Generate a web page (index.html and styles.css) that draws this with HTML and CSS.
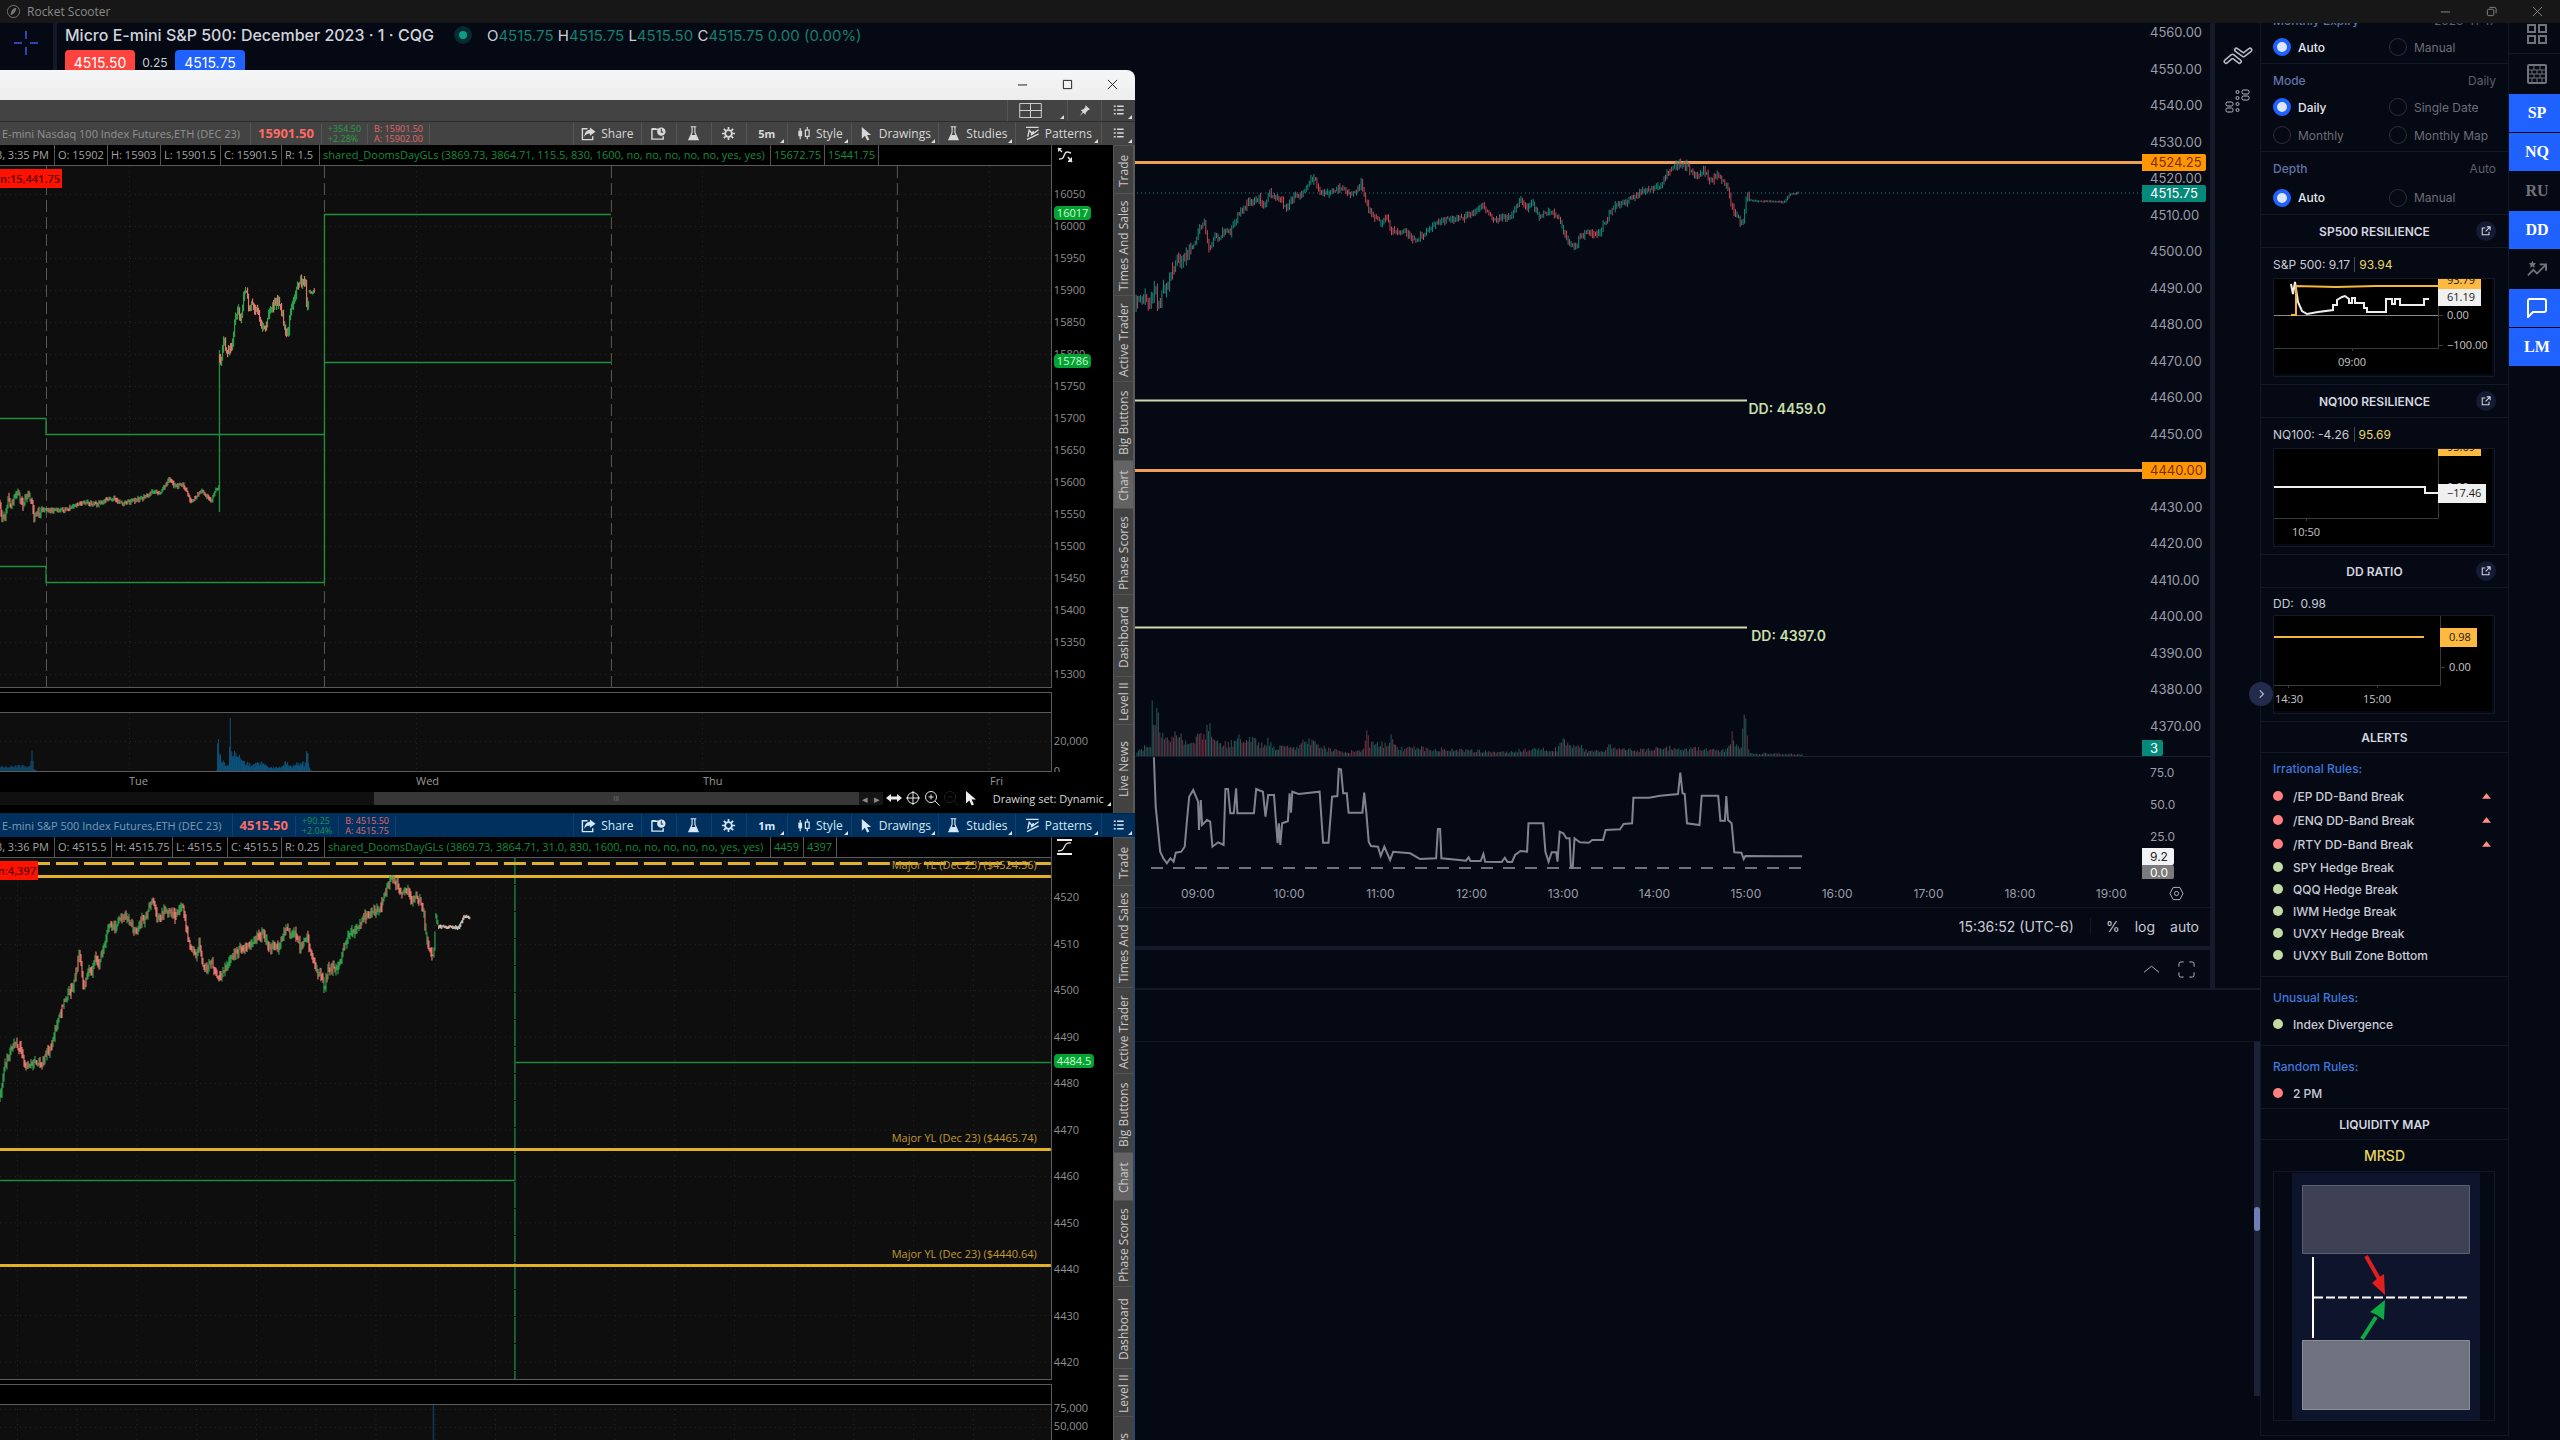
FILE: index.html
```html
<!DOCTYPE html>
<html lang="en">
<head>
    <meta charset="UTF-8">
    <meta name="viewport" content="width=device-width, initial-scale=1.0">
    <title>Rocket Scooter</title>
    <link rel="stylesheet" href="styles.css">
</head>
<body>
    <!-- shared icons -->
    <svg class="sprite" aria-hidden="true">
        <symbol id="i-share" viewBox="0 0 16 16"><path d="M7 3H1.500v11.500h11V11" fill="none" stroke="currentColor" stroke-width="1.500"/><path d="M9.500 1.500 15.500 6l-6 4.500V8C6.500 8 5 9 3.500 11.500 3.800 7 6 4.300 9.500 4z" fill="currentColor"/></symbol>
        <symbol id="i-cal" viewBox="0 0 16 16"><path d="M8 3.500H1v10.500h12V11M1 3h4" fill="none" stroke="currentColor" stroke-width="1.500"/><circle cx="11" cy="6" r="4.500" fill="currentColor"/><path d="M11 3v3.500h2" fill="none" stroke="#444" stroke-width="1.200"/></symbol>
        <symbol id="i-flask" viewBox="0 0 16 16"><path d="M5 .8h6M6.500 1v6L3 14.500h10L9.500 7V1" fill="none" stroke="currentColor" stroke-width="1.200"/><path d="M5.500 9.500h5L13 15H3z" fill="currentColor"/></symbol>
        <symbol id="i-gear" viewBox="0 0 16 16"><circle cx="8" cy="8" r="3.600" fill="none" stroke="currentColor" stroke-width="2"/><path d="M8 1v3M8 12v3M1 8h3M12 8h3M3 3l2.200 2.200M10.800 10.800 13 13M13 3l-2.200 2.200M5.200 10.800 3 13" stroke="currentColor" stroke-width="1.800"/></symbol>
        <symbol id="i-style" viewBox="0 0 16 16"><path d="M4.500 2v12M12 1v3M12 11v3" stroke="currentColor" stroke-width="1.300"/><path d="M2.500 5h4v6h-4z" fill="currentColor"/><path d="M10 4.500h4V11h-4z" fill="none" stroke="currentColor" stroke-width="1.300"/></symbol>
        <symbol id="i-cursor" viewBox="0 0 16 16"><path d="M3 1v12.500l3.300-3 2.400 5 2.300-1.100-2.400-4.900H13z" fill="currentColor"/></symbol>
        <symbol id="i-pattern" viewBox="0 0 16 16"><path d="M1 1.500h13.500M3 11.500 4.500 4.500 8 8.500 14.500 4M2 14.500 14.500 8.500M9 5.500 6.500 10" fill="none" stroke="currentColor" stroke-width="1.500"/></symbol>
        <symbol id="i-list" viewBox="0 0 16 16"><path d="M3 3.500h2M6.500 3.500h7M3 7.500h2M6.500 7.500h7M3 11.500h2M6.500 11.500h7" stroke="currentColor" stroke-width="1.500"/></symbol>
        <symbol id="i-pop" viewBox="0 0 16 16"><path d="M7 4H3v9h9V9M9 2.500h4.500V7M13.500 2.500 7.500 8.500" fill="none" stroke="currentColor" stroke-width="1.400"/></symbol>
        <symbol id="i-up" viewBox="0 0 10 6"><path d="M5 0l5 6H0z" fill="currentColor"/></symbol>
    </svg>

    <header class="titlebar">
        <svg class="logo" viewBox="0 0 16 16"><circle cx="8" cy="8" r="6.500" fill="none" stroke="#777" stroke-width="1"/><path d="M5 12c3-1 6-4 6-8-3 0-6 3-6 8zM3 13h9" fill="#777"/></svg>
        <span class="app-name">Rocket Scooter</span>
        <div class="caption">
            <button aria-label="Minimize"><svg viewBox="0 0 12 12"><path d="M1 6.500h10"/></svg></button>
            <button aria-label="Restore"><svg viewBox="0 0 12 12"><rect x="1.500" y="3.500" width="7" height="7" rx="1.500"/><path d="M4 1.500h5a2 2 0 0 1 2 2V8"/></svg></button>
            <button aria-label="Close"><svg viewBox="0 0 12 12"><path d="M1 1l10 10M11 1 1 11"/></svg></button>
        </div>
    </header>

    <div class="app">
        <div class="workspace">
            <div class="upper">
                <nav class="left-tools">
                    <svg viewBox="0 0 24 24" stroke="#3f57e8" stroke-width="1.500"><path d="M12 0v8M12 16v8M0 12h8M16 12h8"/></svg>
                </nav>

                <main class="tv">
                    <section class="price-row">
                        <div class="price-plot">
                            <svg id="priceChart" viewBox="57 23 2085 733" preserveAspectRatio="none">
                                <path d="M57 193H2142" stroke="#1d7f78" stroke-dasharray="1 3"/>
                                <path d="M57 162.500H2142M57 470.500H2142" stroke="#ef9f52" stroke-width="3"/>
                                <path d="M57 400.500H1747M57 627.500H1747" stroke="#cddcae" stroke-width="2"/>
                            </svg>
                            <div class="legend">
                                <span class="symbol">Micro E-mini S&amp;P 500: December 2023 · 1 · CQG</span>
                                <span class="live"></span>
                                <span class="ohlc">O<b>4515.75</b> H<b>4515.75</b> L<b>4515.50</b> C<b>4515.75</b> <b>0.00 (0.00%)</b></span>
                            </div>
                            <div class="quote">
                                <button class="sell">4515.50</button>
                                <span>0.25</span>
                                <button class="buy">4515.75</button>
                            </div>
                            <span class="dd-label dd-top">DD: 4459.0</span>
                            <span class="dd-label dd-bottom">DD: 4397.0</span>
                        </div>
                        <div class="price-axis">
                            <span>4560.00</span><span>4550.00</span><span>4540.00</span><span>4530.00</span><span>4520.00</span><span>4510.00</span><span>4500.00</span><span>4490.00</span><span>4480.00</span><span>4470.00</span><span>4460.00</span><span>4450.00</span><span>4440.00</span><span>4430.00</span><span>4420.00</span><span>4410.00</span><span>4400.00</span><span>4390.00</span><span>4380.00</span><span>4370.00</span>
                            <em class="tag orange tag-high">4524.25</em>
                            <em class="tag teal tag-last">4515.75</em>
                            <em class="tag orange tag-low">4440.00</em>
                            <em class="tag teal tag-vol">3</em>
                        </div>
                    </section>
                    <section class="osc-row">
                        <svg id="oscChart" viewBox="57 757 2085 123" preserveAspectRatio="none">
                            <path d="M1151 868H1802" stroke="#6f727d" stroke-width="2" stroke-dasharray="12 10"/>
                        </svg>
                        <div class="osc-axis">
                            <span>75.0</span><span>50.0</span><span>25.0</span>
                            <em class="tag white">9.2</em><em class="tag gray">0.0</em>
                        </div>
                    </section>
                    <section class="time-row">
                        <div class="hours">
                            <span>09:00</span><span>10:00</span><span>11:00</span><span>12:00</span><span>13:00</span><span>14:00</span><span>15:00</span><span>16:00</span><span>17:00</span><span>18:00</span><span>19:00</span>
                        </div>
                        <button class="axis-gear" aria-label="Axis settings"><svg viewBox="0 0 16 16"><path d="M4.500 1.500h7L15 8l-3.500 6.500h-7L1 8z"/><circle cx="8" cy="8" r="2.200"/></svg></button>
                    </section>
                    <section class="tv-footer">
                        <button class="clock">15:36:52 (UTC-6)</button>
                        <button class="pct">%</button>
                        <button>log</button>
                        <button>auto</button>
                    </section>
                    <section class="tv-drawer">
                        <button aria-label="Open panel"><svg viewBox="0 0 18 18"><path d="M1 12 9 5.500 17 12"/></svg></button>
                        <button aria-label="Maximize"><svg viewBox="0 0 18 18"><path d="M1 6V3q0-2 2-2h3M12 1h3q2 0 2 2v3M17 12v3q0 2-2 2h-3M6 17H3q-2 0-2-2v-3"/></svg></button>
                    </section>
                </main>

                <nav class="draw-tools">
                    <svg class="waves" viewBox="0 0 30 20">
                        <path class="outer" d="M3 15.500 9.500 10l7 5.500M13.500 4l7 5L27 4"/>
                        <path class="inner" d="M3 15.500 9.500 10l7 5.500M13.500 4l7 5L27 4"/>
                    </svg>
                    <svg class="levels" viewBox="0 0 26 24"><rect x="1" y="13" width="7" height="4" rx="1.500"/><rect x="1" y="19" width="7" height="4" rx="1.500"/><rect x="17" y="1" width="7" height="4" rx="1.500"/><rect x="17" y="7" width="7" height="4" rx="1.500"/><circle cx="12.500" cy="3" r="1.500"/><circle cx="12.500" cy="9" r="1.500"/><circle cx="12.500" cy="15" r="1.500"/><circle cx="12.500" cy="21" r="1.500"/></svg>
                </nav>
            </div>
            <div class="lower">
                <div class="lower-head"></div>
                <div class="lower-body"><div class="scroll"><i></i></div></div>
            </div>
        </div>

        <aside class="panel">
            <button class="collapse" aria-label="Collapse panel"><svg viewBox="0 0 10 10"><path d="M4 2l3 3-3 3"/></svg></button>
            <div class="panel-scroll">
                <section class="setting">
                    <h3>Monthly Expiry <span>2023-11-17</span></h3>
                    <div class="options">
                        <label><input type="radio" name="expiry" checked>Auto</label>
                        <label><input type="radio" name="expiry">Manual</label>
                    </div>
                </section>
                <section class="setting">
                    <h3>Mode <span>Daily</span></h3>
                    <div class="options">
                        <label><input type="radio" name="mode" checked>Daily</label>
                        <label><input type="radio" name="mode">Single Date</label>
                        <label><input type="radio" name="mode">Monthly</label>
                        <label><input type="radio" name="mode">Monthly Map</label>
                    </div>
                </section>
                <section class="setting">
                    <h3>Depth <span>Auto</span></h3>
                    <div class="options tall">
                        <label><input type="radio" name="depth" checked>Auto</label>
                        <label><input type="radio" name="depth">Manual</label>
                    </div>
                </section>

                <h2>SP500 RESILIENCE <button aria-label="Pop out"><svg><use href="#i-pop"/></svg></button></h2>
                <section class="mini">
                    <p>S&amp;P 500: 9.17 <b>93.94</b></p>
                    <svg viewBox="0 0 220 97">
                        <rect width="218" height="95"/>
                        <path class="frame" d="M164.500 0V69.500H0M78.500 69v3M164 36.500h5M164 66.500h5"/>
                        <path class="zero" d="M0 36.500h164"/>
                        <path class="w" d="M17 5l2 10 2-12 3 20 4 9 5 3 11-2 15-2v-5h4v-5l5-3 3-1 4 3v4h3v-5h3v5h9v5h3v4h19v-13h6v5h3v-5h5v6h24v-6h5"/>
                        <path class="y" d="M17 36h5V7l40 1 40-1h62"/>
                        <path class="ybox" d="M164 0h43v10h-43z"/><text class="dark" x="173" y="5">93.79</text>
                        <path class="wbox" d="M164 10h43v17h-43z"/><text class="dark" x="173" y="22">61.19</text>
                        <text x="173" y="40">0.00</text><text x="173" y="70">−100.00</text>
                        <text class="mid" x="78" y="87">09:00</text>
                    </svg>
                </section>

                <h2>NQ100 RESILIENCE <button aria-label="Pop out"><svg><use href="#i-pop"/></svg></button></h2>
                <section class="mini">
                    <p>NQ100: -4.26 <b>95.69</b></p>
                    <svg viewBox="0 0 220 97">
                        <rect width="218" height="95"/>
                        <path class="frame" d="M164.500 0V69.500H0M32.500 69v3"/>
                        <path class="w" d="M0 38h151v6h13"/>
                        <path class="ybox" d="M164 0h43v7h-43z"/><text class="dark" x="173" y="2">95.69</text>
                        <text x="173" y="42">0.00</text>
                        <path class="wbox" d="M164 35h48v19h-48z"/><text class="dark" x="173" y="48">−17.46</text>
                        <text class="mid" x="32" y="87">10:50</text>
                    </svg>
                </section>

                <h2>DD RATIO <button aria-label="Pop out"><svg><use href="#i-pop"/></svg></button></h2>
                <section class="mini tight">
                    <p>DD: &nbsp;0.98</p>
                    <svg viewBox="0 0 220 97">
                        <rect width="218" height="95"/>
                        <path class="frame" d="M166.500 0V69.500H0M14.500 69v3M103.500 69v3M166 51.500h5"/>
                        <path class="y" d="M0 21h150"/>
                        <path class="ybox" d="M166 12h37v19h-37z"/><text class="dark" x="175" y="25">0.98</text>
                        <text x="175" y="55">0.00</text>
                        <text class="mid" x="15" y="87">14:30</text><text class="mid" x="103" y="87">15:00</text>
                    </svg>
                </section>

                <h2 class="short">ALERTS</h2>
                <section class="rules">
                    <h4>Irrational Rules:</h4>
                    <ul>
                        <li class="hot up">/EP DD-Band Break <svg><use href="#i-up"/></svg></li>
                        <li class="hot up">/ENQ DD-Band Break <svg><use href="#i-up"/></svg></li>
                        <li class="hot up">/RTY DD-Band Break <svg><use href="#i-up"/></svg></li>
                        <li>SPY Hedge Break</li>
                        <li>QQQ Hedge Break</li>
                        <li>IWM Hedge Break</li>
                        <li>UVXY Hedge Break</li>
                        <li>UVXY Bull Zone Bottom</li>
                    </ul>
                </section>
                <section class="rules spaced">
                    <h4>Unusual Rules:</h4>
                    <ul><li>Index Divergence</li></ul>
                </section>
                <section class="rules spaced last">
                    <h4>Random Rules:</h4>
                    <ul><li class="hot">2 PM</li></ul>
                </section>

                <h2 class="short">LIQUIDITY MAP</h2>
                <section class="liquidity">
                    <h5>MRSD</h5>
                    <svg viewBox="0 0 220 248">
                        <path d="M18 1h188v247H18z" fill="#0e142b"/>
                        <path d="M28.500 13.500h167v68h-167z" fill="#3e4154" stroke="#5c6073"/>
                        <path d="M28.500 168.500h167v69h-167z" fill="#6e717e" stroke="#8b8e9a"/>
                        <path d="M39 85v81" stroke="#fff" stroke-width="2"/>
                        <path d="M40 125.500h153" stroke="#fff" stroke-width="2" stroke-dasharray="9 3"/>
                        <path d="M92 84l13 23" stroke="#e0201f" stroke-width="4"/><path d="M98 111l6-5 6-4 1 21z" fill="#e0201f"/>
                        <path d="M88 167l14-22" stroke="#0faa45" stroke-width="4"/><path d="M96 140l15-12-1 20-7-5z" fill="#0faa45"/>
                    </svg>
                </section>
            </div>
        </aside>

        <nav class="rail">
            <button aria-label="Layout"><svg viewBox="0 0 20 20"><path d="M1 1h7v7H1zM12 1h7v7h-7zM1 12h7v7H1zM12 12h7v7h-7z"/></svg></button>
            <button aria-label="Wall"><svg viewBox="0 0 20 20"><rect x="1" y="1" width="18" height="18" rx="1"/><path stroke-width="1" d="M2 6h16M2 10h16M2 14h16M7 2v4M13 2v4M5 6v4M10 6v4M15 6v4M7 10v4M13 10v4M5 14v4M10 14v4M15 14v4"/></svg></button>
            <button class="on">SP</button>
            <button class="on">NQ</button>
            <button>RU</button>
            <button class="on">DD</button>
            <button aria-label="Signals"><svg viewBox="0 0 22 18"><path d="M1 16l6-6 4 4 9-9M14 4h7v7"/><path d="M6 0l1.200 2.500 2.800.3-2 2 .5 2.700L6 6.200 3.500 7.500 4 4.800l-2-2 2.800-.3z" fill="currentColor" stroke="none"/></svg></button>
            <button class="on" aria-label="Chat"><svg viewBox="0 0 20 20"><path d="M1 19V3q0-2 2-2h14q2 0 2 2v9q0 2-2 2H6z"/></svg></button>
            <button class="on">LM</button>
        </nav>
    </div>

    <!-- floating trading window -->
    <div class="window">
        <div class="window-bar">
            <button aria-label="Minimize"><svg viewBox="0 0 12 12"><path d="M1 6.500h10"/></svg></button>
            <button aria-label="Maximize"><svg viewBox="0 0 12 12"><path d="M1.500 1.500h9v9h-9z"/></svg></button>
            <button aria-label="Close"><svg viewBox="0 0 12 12"><path d="M1 1l10 10M11 1 1 11"/></svg></button>
        </div>
        <div class="window-tools">
            <button class="drop w60" aria-label="Grid"><svg class="wide" viewBox="0 0 24 16"><path d="M.5.500h23v15H.500zM12 0v16M0 8h24" fill="none" stroke="currentColor"/></svg></button>
            <button class="w34" aria-label="Pin"><svg viewBox="0 0 16 16"><path d="M9 2l5 5-2 .5-2.500 2.500-.5 2.500L6.800 10.300 2.500 14 6 9.500 4 7.500 6.500 7 9 4.500z" fill="currentColor"/></svg></button>
            <button class="drop w34" aria-label="Menu"><svg><use href="#i-list"/></svg></button>
        </div>

        <section class="chart">
            <div class="toolbar">
                <span class="name">E-mini Nasdaq 100 Index Futures,ETH (DEC 23)</span>
                <strong>15901.50</strong>
                <span class="chg">+354.50<br>+2.28%</span>
                <span class="bid">B: 15901.50<br>A: 15902.00</span>
                <div class="actions">
                    <button class="w68"><svg><use href="#i-share"/></svg>Share</button>
                    <button class="w35" aria-label="Events"><svg><use href="#i-cal"/></svg></button>
                    <button class="w35" aria-label="Lab"><svg><use href="#i-flask"/></svg></button>
                    <button class="w35" aria-label="Settings"><svg><use href="#i-gear"/></svg></button>
                    <button class="drop w41"><b>5m</b></button>
                    <button class="drop w64"><svg><use href="#i-style"/></svg>Style</button>
                    <button class="drop w87"><svg><use href="#i-cursor"/></svg>Drawings</button>
                    <button class="drop w77"><svg><use href="#i-flask"/></svg>Studies</button>
                    <button class="drop w86"><svg><use href="#i-pattern"/></svg>Patterns</button>
                    <button class="drop w34" aria-label="Menu"><svg><use href="#i-list"/></svg></button>
                </div>
            </div>
            <div class="chart-body">
                <div class="chart-area">
                    <div class="row data-row">
                        <div class="cells cells-nq">
                            <span class="cut"><i>3, 3:35 PM</i></span><span>O: 15902</span><span>H: 15903</span><span>L: 15901.5</span><span>C: 15901.5</span><span>R: 1.5</span><span class="g">shared_DoomsDayGLs (3869.73, 3864.71, 115.5, 830, 1600, no, no, no, no, no, yes, yes)</span><span class="g">15672.75</span><span class="g">15441.75</span>
                        </div>
                        <svg class="scale-icon" viewBox="0 0 16 16"><path d="M1 5V1h4zM15 15h-4v-1l4-4z" fill="#eee"/><path d="M1 1l4 4M2 12c4 0 4-1 5.500-4.500S11 5 14 6M11 10l4 5" fill="none" stroke="#ddd" stroke-width="1.500"/></svg>
                    </div>
                    <div class="row plot-row">
                        <div class="plot">
                            <svg id="nqChart" viewBox="0 166 1051 521" preserveAspectRatio="none"></svg>
                            <span class="badge badge-nq"><i>own:15,441.75</i></span>
                        </div>
                        <div class="axis axis-nq">
                            <span>16050</span><span>16000</span><span>15950</span><span>15900</span><span>15850</span><span>15800</span><span>15750</span><span>15700</span><span>15650</span><span>15600</span><span>15550</span><span>15500</span><span>15450</span><span>15400</span><span>15350</span><span>15300</span>
                            <em class="chip chip-a">16017</em>
                            <em class="chip chip-b">15786</em>
                        </div>
                    </div>
                    <div class="row strip-row"><div></div></div>
                    <div class="row vol-row">
                        <svg id="nqVolume" viewBox="0 713 1051 58" preserveAspectRatio="none"></svg>
                        <div class="axis axis-vol"><span>20,000</span><span>0</span></div>
                    </div>
                    <div class="days"><span>Tue</span><span>Wed</span><span>Thu</span><span>Fri</span></div>
                    <div class="scroller">
                        <div class="track"><div class="thumb">III</div></div>
                        <button aria-label="Scroll left">◂</button>
                        <button aria-label="Scroll right">▸</button>
                        <svg viewBox="0 0 16 16"><path d="M0 8l5-4v8zM16 8l-5-4v8zM5 6.500h6v3H5z" fill="#eee" stroke="none"/></svg>
                        <svg viewBox="0 0 16 16"><circle cx="8" cy="8" r="5.500"/><path d="M8 1v14M1 8h14"/></svg>
                        <svg viewBox="0 0 16 16"><circle cx="7" cy="7" r="5.500"/><path d="M11 11l4.500 4.500M4.500 7h5M7 4.500v5"/></svg>
                        <svg class="faint" viewBox="0 0 16 16"><circle cx="7" cy="7" r="5.500"/><path d="M11 11l4.500 4.500M4.500 7h5"/></svg>
                        <svg class="solid" viewBox="0 0 16 16"><use href="#i-cursor"/></svg>
                        <button class="drop set">Drawing set: Dynamic</button>
                    </div>
                </div>
                <nav class="tabs">
                    <a href="#" class="t48">Trade</a><a href="#" class="t102">Times And Sales</a><a href="#" class="t86">Active Trader</a><a href="#" class="t79">Big Buttons</a><a href="#" class="t48 active">Chart</a><a href="#" class="t86">Phase Scores</a><a href="#" class="t82">Dashboard</a><a href="#" class="t48">Level II</a><a href="#" class="t86">Live News</a>
                </nav>
            </div>
        </section>

        <section class="chart focused">
            <div class="toolbar">
                <span class="name">E-mini S&amp;P 500 Index Futures,ETH (DEC 23)</span>
                <strong>4515.50</strong>
                <span class="chg">+90.25<br>+2.04%</span>
                <span class="bid">B: 4515.50<br>A: 4515.75</span>
                <div class="actions">
                    <button class="w68"><svg><use href="#i-share"/></svg>Share</button>
                    <button class="w35" aria-label="Events"><svg><use href="#i-cal"/></svg></button>
                    <button class="w35" aria-label="Lab"><svg><use href="#i-flask"/></svg></button>
                    <button class="w35" aria-label="Settings"><svg><use href="#i-gear"/></svg></button>
                    <button class="drop w41"><b>1m</b></button>
                    <button class="drop w64"><svg><use href="#i-style"/></svg>Style</button>
                    <button class="drop w87"><svg><use href="#i-cursor"/></svg>Drawings</button>
                    <button class="drop w77"><svg><use href="#i-flask"/></svg>Studies</button>
                    <button class="drop w86"><svg><use href="#i-pattern"/></svg>Patterns</button>
                    <button class="drop w34" aria-label="Menu"><svg><use href="#i-list"/></svg></button>
                </div>
            </div>
            <div class="chart-body">
                <div class="chart-area">
                    <div class="row data-row">
                        <div class="cells cells-es">
                            <span class="cut"><i>3, 3:36 PM</i></span><span>O: 4515.5</span><span>H: 4515.75</span><span>L: 4515.5</span><span>C: 4515.5</span><span>R: 0.25</span><span class="g">shared_DoomsDayGLs (3869.73, 3864.71, 31.0, 830, 1600, no, no, no, no, no, yes, yes)</span><span class="g">4459</span><span class="g">4397</span>
                        </div>
                        <svg class="scale-icon" viewBox="0 0 16 16"><path d="M0 1h15M0 15h15" stroke="#eee" stroke-width="2"/><path d="M1 12c4 0 5-1 6.500-4.500S11 3.500 14 4" fill="none" stroke="#ddd" stroke-width="1.300"/></svg>
                    </div>
                    <div class="row plot-row">
                        <div class="plot">
                            <svg id="esChart" viewBox="0 858 1051 521" preserveAspectRatio="none"></svg>
                            <span class="badge badge-es"><i>own:4,397</i></span>
                            <span class="level level-1">Major YL (Dec 23) ($4524.56)</span>
                            <span class="level level-2">Major YL (Dec 23) ($4465.74)</span>
                            <span class="level level-3">Major YL (Dec 23) ($4440.64)</span>
                        </div>
                        <div class="axis axis-es">
                            <span>4520</span><span>4510</span><span>4500</span><span>4490</span><span>4480</span><span>4470</span><span>4460</span><span>4450</span><span>4440</span><span>4430</span><span>4420</span>
                            <em class="chip chip-c">4484.5</em>
                        </div>
                    </div>
                    <div class="row strip-row"><div></div></div>
                    <div class="row vol-row">
                        <svg id="esVolume" viewBox="0 1405 1051 58" preserveAspectRatio="none"></svg>
                        <div class="axis axis-vol2"><span>75,000</span><span>50,000</span></div>
                    </div>
                </div>
                <nav class="tabs">
                    <a href="#" class="t48">Trade</a><a href="#" class="t102">Times And Sales</a><a href="#" class="t86">Active Trader</a><a href="#" class="t79">Big Buttons</a><a href="#" class="t48 active">Chart</a><a href="#" class="t86">Phase Scores</a><a href="#" class="t82">Dashboard</a><a href="#" class="t48">Level II</a><a href="#" class="t86">Live News</a>
                </nav>
            </div>
        </section>
    </div>

    <script src="charts.js"></script>
</body>
</html>
```
FILE: styles.css
```css
:root {
    --bg: #050913;
    --line: #131827;
    --band: #151a28;
    --text: #c9ccd6;
    --muted: #9a9da8;
    --blue: #1f62ff;
    --red: #ff8080;
    --green: #c3dba6;
    --ui: Inter, "Open Sans", sans-serif;
    --tos: "Open Sans", "Noto Sans", sans-serif;
}

* {
    margin: 0;
    padding: 0;
    box-sizing: border-box;
}

body {
    height: 100vh;
    display: flex;
    flex-direction: column;
    overflow: hidden;
    position: relative;
    background: var(--bg);
    color: var(--text);
    font-family: var(--ui);
    font-size: 12px;
}

button {
    border: none;
    background: none;
    color: inherit;
    font: inherit;
    cursor: pointer;
}

svg { display: block; }
em, i { font-style: normal; }
ul { list-style: none; }
a { color: inherit; text-decoration: none; }
.sprite { display: none; }

/* title bar */
.titlebar {
    flex: none;
    height: 23px;
    display: flex;
    align-items: center;
    padding-left: 6px;
    background: #171717;
    color: #8a8a8a;
    font-family: var(--tos);
}

.logo {
    width: 15px;
    height: 15px;
    margin-right: 6px;
}

.caption {
    margin-left: auto;
    display: flex;
}

.caption button {
    width: 46px;
    display: flex;
    justify-content: center;
}

.caption svg {
    width: 11px;
    height: 11px;
    fill: none;
    stroke: #8c8c8c;
}

/* main frame */
.app {
    flex: 1;
    display: flex;
    min-height: 0;
}

.workspace {
    flex: 1;
    min-width: 0;
    display: flex;
    flex-direction: column;
}

.upper {
    display: flex;
    border-bottom: 2px solid var(--band);
}

.left-tools {
    width: 57px;
    padding: 8px 0 0 14px;
    border-right: 4px solid #141828;
}

.left-tools svg {
    width: 24px;
    height: 24px;
}

.tv {
    flex: 1;
    min-width: 0;
    border-right: 5px solid #151929;
}

.price-row {
    display: flex;
    height: 734px;
    border-bottom: 1px solid #1a1f2d;
}

.price-plot {
    flex: 1;
    position: relative;
}

.price-plot svg {
    width: 100%;
    height: 100%;
}

.legend,
.quote {
    position: absolute;
    left: 8px;
    display: flex;
    align-items: center;
    white-space: nowrap;
}

.legend { top: 2px; }
.quote { top: 27px; }

.symbol {
    font-size: 16px;
    font-weight: 500;
    line-height: 20px;
    color: #d2d4dc;
}

.live {
    width: 18px;
    height: 18px;
    margin: 0 15px 0 20px;
    border: 5px solid #062a31;
    border-radius: 50%;
    background: #0b9d83;
}

.ohlc { font-size: 15px; }

.ohlc b {
    font-weight: normal;
    color: #138070;
}

.quote button {
    width: 70px;
    height: 24px;
    border-radius: 4px;
    color: #fff;
    font-size: 14px;
}

.quote span {
    width: 40px;
    text-align: center;
}

.sell { background: #ff4440; }
.buy { background: var(--blue); }

.dd-label {
    position: absolute;
    right: 316px;
    font-size: 14px;
    font-weight: 600;
    color: #c8dfa8;
}

.dd-top { top: 377px; }
.dd-bottom { top: 604px; }

.price-axis {
    width: 68px;
    padding: 1px 8px 22px;
    position: relative;
    display: flex;
    flex-direction: column;
    justify-content: space-between;
    line-height: 16px;
    font-size: 13px;
    color: var(--muted);
}

.tag {
    position: absolute;
    left: 0;
    width: 64px;
    height: 17px;
    padding-left: 8px;
    line-height: 17px;
    border-radius: 0 2px 2px 0;
    color: #fff;
}

.orange { background: #ff9800; color: #7c2c00; }
.teal { background: #05897a; }
.tag-high { top: 131px; }
.tag-last { top: 162px; }
.tag-low { top: 439px; }
.tag-vol { top: 717px; width: 21px; height: 16px; }

.osc-row {
    display: flex;
    height: 123px;
}

.osc-row > svg {
    flex: 1;
    min-width: 0;
    height: 123px;
}

.osc-axis {
    width: 68px;
    padding-left: 8px;
    line-height: 32px;
    color: var(--muted);
}

.osc-axis span { display: block; }

.osc-axis .tag {
    position: static;
    display: block;
    width: 32px;
    margin-left: -8px;
}

.white { background: #f2f3f7; color: #222; }
.osc-axis .white { margin-top: -5px; }
.gray { background: #7b7b7b; }
.osc-axis .gray { height: 14px; line-height: 16px; overflow: hidden; }

.time-row {
    height: 28px;
    display: flex;
    align-items: center;
    justify-content: flex-end;
    border-bottom: 1px solid var(--line);
    color: var(--muted);
}

.hours {
    width: 1005px;
    display: flex;
}

.hours span {
    flex: 1;
    text-align: center;
}

.axis-gear {
    width: 53px;
    padding-left: 12px;
}

.axis-gear svg {
    width: 15px;
    height: 15px;
}

.axis-gear svg,
.tv-drawer svg,
.draw-tools svg,
.left-tools svg {
    fill: none;
}

.axis-gear svg,
.tv-drawer svg,
.draw-tools svg {
    stroke: #b9bcc7;
}

.tv-footer,
.tv-drawer {
    display: flex;
    justify-content: flex-end;
    align-items: center;
    gap: 15px;
    padding-right: 11px;
}

.tv-footer {
    height: 42px;
    padding-bottom: 2px;
    border-bottom: 4px solid var(--band);
    font-size: 14px;
}

.tv-drawer {
    height: 38px;
    gap: 18px;
    padding-right: 15px;
}

.clock {
    padding-right: 16px;
    border-right: 1px solid var(--line);
}

.tv-drawer svg { width: 17px; height: 17px; }

.draw-tools {
    width: 45px;
    padding: 23px 0 0 1px;
    display: flex;
    flex-direction: column;
    align-items: center;
    gap: 23px;
}

.waves {
    width: 30px;
    height: 20px;
    stroke-linecap: round;
    stroke-linejoin: round;
}

.waves .outer { stroke-width: 5; }
.waves .inner { stroke: var(--bg); stroke-width: 2; }

.levels {
    width: 26px;
    height: 24px;
}

.lower {
    flex: 1;
    display: flex;
    flex-direction: column;
}

.lower-head {
    height: 52px;
    border-bottom: 1px solid var(--line);
}

.lower-body {
    flex: 1;
    display: flex;
    justify-content: flex-end;
    padding-bottom: 44px;
}

.scroll {
    width: 6px;
    display: flex;
    align-items: center;
    background: #1c2138;
}

.scroll i {
    width: 6px;
    height: 24px;
    border-radius: 3px;
    background: #6f7fb5;
}

/* right panel */
.panel {
    flex: none;
    width: 249px;
    position: relative;
    border: 1px solid var(--line);
    border-top: none;
    margin-bottom: 4px;
}

.panel-scroll {
    height: 100%;
    overflow: hidden;
}

.collapse {
    position: absolute;
    z-index: 2;
    left: -12px;
    top: 659px;
    width: 24px;
    height: 24px;
    border-radius: 50%;
    background: #222b4c;
}

.collapse svg {
    width: 12px;
    height: 12px;
    margin: auto;
    fill: none;
    stroke: #b5bbd2;
}

.setting {
    padding: 3px 12px 0;
    border-bottom: 1px solid var(--line);
}

.setting:first-child { margin-top: -19px; }

.setting h3 {
    height: 26px;
    display: flex;
    justify-content: space-between;
    align-items: center;
    font-size: 12px;
    font-weight: 500;
    color: #6273a8;
}

.setting h3 span {
    font-weight: normal;
    color: #5d606b;
}

.options {
    display: grid;
    grid-template-columns: 116px 1fr;
    grid-auto-rows: 28px;
    padding-bottom: 2px;
}

.options.tall {
    grid-auto-rows: 33px;
    padding-bottom: 0;
}

.options label {
    display: flex;
    align-items: center;
    gap: 7px;
    white-space: nowrap;
    color: #6b6e78;
}

.options label:has(:checked) {
    color: #e4e6ee;
    font-weight: 500;
}

.options input {
    appearance: none;
    width: 18px;
    height: 18px;
    border: 1px solid #2b2f3f;
    border-radius: 50%;
}

.options input:checked {
    border: 4px solid var(--blue);
    background: #dde6ff;
}

.panel h2 {
    height: 33px;
    position: relative;
    display: flex;
    align-items: center;
    justify-content: center;
    padding-right: 20px;
    border-bottom: 1px solid var(--line);
    font-size: 12px;
    font-weight: 600;
    color: #d5d7e0;
}

.panel h2.short {
    height: 31px;
    padding-right: 0;
}

.panel h2 button {
    position: absolute;
    right: 12px;
    width: 20px;
    height: 20px;
    border-radius: 50%;
    background: #151b34;
    display: flex;
    align-items: center;
    justify-content: center;
}

.panel h2 svg {
    width: 12px;
    height: 12px;
}

.mini {
    padding: 8px 12px 7px;
    border-bottom: 1px solid var(--line);
}

.mini p {
    line-height: 18px;
    margin-bottom: 4px;
}

.mini.tight { padding-top: 7px; }
.mini.tight p { margin-bottom: 2px; }

.mini p b {
    margin-left: 1px;
    padding-left: 4px;
    border-left: 1px solid #444855;
    font-weight: normal;
    color: #e9d96a;
}

.mini svg,
.liquidity svg {
    width: 222px;
    border: 1px solid var(--line);
}

.mini svg { font: 11px var(--tos); fill: #c8c8c8; }
.mini rect { fill: #000; }
.mini path { fill: none; stroke-width: 1; }
.mini .frame { stroke: #3a3a3a; }
.mini .zero { stroke: #8a8a8a; }
.mini .w { stroke: #eee; stroke-width: 2; }
.mini .y { stroke: #f6b73e; stroke-width: 2; }
.mini .ybox { fill: #fdb940; }
.mini .wbox { fill: #f0f0f0; }
.mini .dark { fill: #1a1a1a; }
.mini .mid { text-anchor: middle; }

.rules {
    padding: 0 12px 10px;
    border-bottom: 1px solid var(--line);
}

.rules.spaced { padding-top: 5px; }
.rules.last { padding-bottom: 4px; }

.rules h4 {
    line-height: 31px;
    font-size: 12px;
    font-weight: 500;
    color: #3f78dc;
}

.rules li {
    height: 22px;
    display: flex;
    align-items: center;
    font-weight: 500;
}

.rules li::before {
    content: "";
    width: 10px;
    height: 10px;
    margin-right: 10px;
    border-radius: 50%;
    background: var(--green);
}

.rules li.up { height: 24px; }
.rules li.hot::before { background: var(--red); }

.rules li svg {
    width: 9px;
    height: 6px;
    margin: 0 5px 0 auto;
    color: #ff8f80;
}

.liquidity { padding: 0 12px; }

.liquidity h5 {
    line-height: 31px;
    text-align: center;
    font-size: 14px;
    font-weight: 500;
    color: #e8d566;
}

/* right rail */
.rail {
    width: 51px;
    display: flex;
    flex-direction: column;
    gap: 1px;
}

.rail button {
    height: 38px;
    display: flex;
    align-items: center;
    justify-content: center;
    padding-left: 5px;
    color: #71737b;
    font: bold 16px "Liberation Serif", serif;
}

.rail button:first-child {
    height: 31px;
    padding-bottom: 8px;
    border-bottom: 1px solid var(--line);
}

.rail .on {
    background: var(--blue);
    color: #fff;
}

.rail svg {
    width: 20px;
    height: 20px;
    fill: none;
    stroke: currentColor;
    stroke-width: 2;
}

/* floating window */
.window {
    position: absolute;
    z-index: 5;
    left: 0;
    top: 70px;
    bottom: 0;
    width: 44.33%;
    display: flex;
    flex-direction: column;
    overflow: hidden;
    border-radius: 0 8px 0 0;
    background: #000;
    color: #d8d8d8;
    font-family: var(--tos);
    font-size: 11px;
    white-space: nowrap;
}

.window > * { flex: none; }

.window-bar {
    height: 30px;
    display: flex;
    justify-content: flex-end;
    padding-bottom: 2px;
    background: linear-gradient(#f5f6f7, #ededed);
}

.window-bar button {
    width: 45px;
    display: flex;
    align-items: center;
    justify-content: center;
}

.window-bar svg {
    width: 11px;
    height: 11px;
    fill: none;
    stroke: #111;
}

.window-tools {
    height: 21px;
    display: flex;
    justify-content: flex-end;
    background: #434343;
}

.window-tools button,
.actions button {
    position: relative;
    display: flex;
    align-items: center;
    justify-content: center;
    gap: 5px;
    border-left: 1px solid #555;
}

.window-tools svg,
.actions svg {
    width: 15px;
    height: 15px;
}

.window-tools svg.wide {
    width: 23px;
    margin-right: 14px;
}

/* corner mark of the drop-down buttons */
.drop::after {
    content: "";
    position: absolute;
    right: 3px;
    bottom: 2px;
    border: 2px solid transparent;
    border-right-color: #ddd;
    border-bottom-color: #ddd;
}

.w34 { width: 34px; }
.w35 { width: 35px; }
.w41 { width: 41px; }
.w60 { width: 60px; }
.w64 { width: 64px; }
.w68 { width: 68px; }
.w77 { width: 77px; }
.w86 { width: 86px; }
.w87 { width: 87px; }

.toolbar {
    height: 24px;
    display: flex;
    align-items: center;
    padding-left: 2px;
    border-top: 1px solid #2c2c2c;
    background: #434343;
}

.name { color: #929292; }

.toolbar strong {
    margin-left: 10px;
    padding: 0 7px;
    border-left: 1px solid #555;
    line-height: 23px;
    font-size: 13px;
    color: #ff6b63;
}

.chg,
.bid {
    padding: 0 6px;
    border-left: 1px solid #555;
    font-size: 9px;
    line-height: 10px;
}

.chg { color: #22a044; }
.bid { border-right: 1px solid #555; color: #e26767; }

.actions {
    margin-left: auto;
    display: flex;
    align-self: stretch;
}

.actions button { font-size: 12px; }
.actions b { font-size: 11px; }

.focused .toolbar {
    background: #00315e;
    border-color: #00294f;
    color: #d5e8fa;
}

.focused .name { color: #7f98b3; }
.focused .toolbar * { border-left-color: #12406c; border-right-color: #12406c; }
.focused .drop::after { border-left-color: transparent; border-right-color: #d5e8fa; }
.focused .toolbar .chg { color: #169455; }

.chart-body {
    display: flex;
}

.chart-area {
    flex: 1;
    min-width: 0;
}

.row {
    display: grid;
    grid-template-columns: 1fr 61px;
}

.data-row { height: 21px; }

.cells {
    display: grid;
    border-bottom: 1px solid #5a5a5a;
    border-right: 1px solid #5a5a5a;
    line-height: 20px;
    color: #a5a5a5;
}

.cells-nq { grid-template-columns: 55px 53px 53px 60px 61px 38px 451px 54px 54px; }
.cells-es { grid-template-columns: 55px 57px 61px 55px 54px 43px 446px 33px 33px; }

.cells span {
    padding-left: 3px;
    border-right: 1px solid #555;
    overflow: hidden;
}

.cells .cut {
    display: flex;
    justify-content: flex-end;
    padding-right: 5px;
}

.cells .g { color: #158c3c; }

.scale-icon {
    width: 16px;
    height: 16px;
    margin: 2px 0 0 5px;
}

.plot-row { height: 522px; }

.plot {
    position: relative;
    background: #0e0e0e;
    border-right: 1px solid #5a5a5a;
    border-bottom: 1px solid #5a5a5a;
    overflow: hidden;
}

.plot svg {
    width: 100%;
    height: 100%;
}

.axis {
    position: relative;
    display: flex;
    flex-direction: column;
    justify-content: space-between;
    padding-left: 2px;
    line-height: 16px;
    color: #8f8f8f;
}

.axis-nq { padding-top: 20px; padding-bottom: 6px; }
.axis-es { padding-top: 31px; padding-bottom: 10px; }
.axis-vol { padding-top: 21px; overflow: hidden; justify-content: flex-start; gap: 14px; }
.axis-vol2 { margin-top: -4px; justify-content: flex-start; gap: 2px; }

.chip {
    position: absolute;
    left: 2px;
    padding: 0 3px;
    line-height: 14px;
    border-radius: 4px;
    background: #05a233;
    color: #c9ffd2;
}

.chip-a { top: 40px; }
.chip-b { top: 188px; }
.chip-c { top: 196px; }

.badge {
    position: absolute;
    left: 0;
    top: 3px;
    height: 19px;
    display: flex;
    justify-content: flex-end;
    padding-right: 2px;
    overflow: hidden;
    background: #ff1200;
    color: #5c0500;
    font-weight: 600;
    line-height: 19px;
}

.badge-nq { width: 62px; }
.badge-es { width: 38px; }

.level {
    position: absolute;
    right: 14px;
    line-height: 16px;
    color: #c09a30;
}

.level-1 { top: -1px; }
.level-2 { top: 272px; }
.level-3 { top: 388px; }

.strip-row {
    height: 24px;
    padding-top: 4px;
}

.strip-row div {
    border: 1px solid #5a5a5a;
    border-left: none;
    border-bottom: none;
}

.vol-row { height: 60px; }

.vol-row svg {
    width: 100%;
    height: 60px;
    background: #0e0e0e;
    border: 1px solid #5a5a5a;
    border-left: none;
}

.days {
    height: 19px;
    display: flex;
    align-items: center;
    padding-left: 129px;
    overflow: hidden;
    color: #9a9a9a;
}

.days span {
    flex: 0 0 287px;
    line-height: 16px;
    padding-bottom: 2px;
}

.scroller {
    height: 14px;
    margin-bottom: 8px;
    display: flex;
    align-items: center;
    padding-right: 9px;
}

.track {
    flex: 1;
    height: 13px;
    display: flex;
    justify-content: flex-end;
    background: #101010;
}

.thumb {
    width: 56.5%;
    background: #373737;
    color: #777;
    font-size: 7px;
    line-height: 13px;
    text-align: center;
}

.scroller button {
    width: 12px;
    height: 13px;
    line-height: 13px;
    background: #151515;
    color: #8a8a8a;
}

.scroller svg {
    width: 16px;
    height: 16px;
    margin-left: 3px;
    fill: none;
    stroke: #e8e8e8;
}

.scroller .faint { stroke: #222; }
.scroller .solid { stroke: none; color: #eee; margin-left: 4px; }

.scroller .set {
    position: relative;
    width: auto;
    margin-left: 14px;
    background: none;
    color: #d8d8d8;
}

.scroller .set::after { right: -7px; bottom: -1px; }

.tabs {
    width: 22px;
    display: flex;
    flex-direction: column;
    border-left: 1px solid #555;
    border-right: 2px solid #595959;
    background: #424242;
}

.focused .tabs { border-right: 2px solid #274a6c; }

.tabs a {
    flex: none;
    display: flex;
    align-items: center;
    justify-content: center;
    padding-bottom: 3px;
    writing-mode: vertical-rl;
    transform: rotate(180deg);
    border-bottom: 1px solid #525252;
    font-size: 12px;
    line-height: 20px;
    color: #c8c8c8;
}

.tabs .active { background: #636363; }
.t48 { height: 48px; }
.t79 { height: 79px; }
.t82 { height: 82px; }
.t86 { height: 86px; }
.t102 { height: 102px; }
```
FILE: charts.js
```javascript
const NS = 'http://www.w3.org/2000/svg';

// small repeatable random generator so every load draws the same bars
function random(seed) {
    return () => {
        seed = (seed * 16807) % 2147483647;
        return seed / 2147483647;
    };
}

function draw(id, d, stroke, width = 1, dash = '') {
    const path = document.createElementNS(NS, 'path');
    path.setAttribute('d', d);
    path.setAttribute('fill', 'none');
    path.setAttribute('stroke', stroke);
    path.setAttribute('stroke-width', width);
    if (dash) path.setAttribute('stroke-dasharray', dash);
    document.getElementById(id).appendChild(path);
}

function parse(text, ox, oy, sx, sy) {
    return text.trim().split(/\s+/).map(p => {
        const [x, y] = p.split(',').map(Number);
        return [ox + x / sx, oy + y / sy];
    });
}

function valueAt(points, x) {
    for (let i = 1; i < points.length; i++) {
        const [x0, y0] = points[i - 1];
        const [x1, y1] = points[i];
        if (x <= x1) return y0 + (y1 - y0) * (x - x0) / ((x1 - x0) || 1);
    }
    return points[points.length - 1][1];
}

function candles(id, points, step, size, colors, seed, width = 1.2) {
    const rnd = random(seed);
    const paths = colors.map(() => '');
    const end = points[points.length - 1][0];
    let prev = points[0][1];
    for (let x = points[0][0]; x <= end; x += step) {
        const y = valueAt(points, x) + (rnd() - 0.5) * size;
        const top = Math.min(y, prev) - rnd() * size * 0.7;
        const bottom = Math.max(y, prev) + rnd() * size * 0.7;
        const k = rnd() < 0.25 ? (rnd() < 0.5 ? 0 : 1) : (y <= prev ? 0 : 1);
        paths[k] += `M${x.toFixed(1)} ${top.toFixed(1)}V${(bottom + 1).toFixed(1)}`;
        prev = y;
    }
    paths.forEach((d, i) => draw(id, d, colors[i], width));
}

function bars(id, points, base, step, colors, seed) {
    const rnd = random(seed);
    const paths = colors.map(() => '');
    const end = points[points.length - 1][0];
    for (let x = points[0][0]; x <= end; x += step) {
        const h = valueAt(points, x) * (0.55 + rnd() * 0.6);
        const k = Math.floor(rnd() * colors.length);
        paths[k] += `M${x.toFixed(1)} ${base}v${-Math.max(h, 1).toFixed(1)}`;
    }
    paths.forEach((d, i) => draw(id, d, colors[i], 1));
}

function line(points) {
    return 'M' + points.map(p => p.map(v => v.toFixed(1)).join(' ')).join('L');
}

/* Nasdaq, 5 minutes */
let grid = '';
for (let y = 194.5; y < 688; y += 32) grid += `M0 ${y}H1051`;
for (const x of [129.5, 416.5, 702.5, 989.5]) grid += `M${x} 166V688`;
draw('nqChart', grid, '#272727', 1, '1 4');
draw('nqChart', 'M46.500 166V688M324.500 166V688M611.500 166V688M897.500 166V688', '#585858', 1, '12 5');
draw('nqChart', 'M0 418.500H46V434.500H324.500M0 566.500H46V582.500H324.500V214.500H611M324.500 362.500H611M219.500 350V512', '#1f913c', 1.3);
candles('nqChart', parse(`0,1040 5,1075 12,1070 20,1010 27,1040 35,1010 45,995 55,1035 65,1010 78,1020 82,1068 90,1058
    105,1048`, 0, 160, 2.45, 3), 1, 6, ['#2ba04a', '#e2756c'], 7);
candles('nqChart', parse(`105,1048 130,1050 160,1047 185,1033 210,1025 235,1032 270,1012 300,1028 345,1015 370,1000
    380,990 390,1000 413,957 430,980 447,968 468,1022 495,992 517,1022 528,990 537,975`, 0, 160, 2.45, 3), 1, 3, ['#2ba04a', '#e2756c'], 9);
candles('nqChart', parse(`538,600 542,610 545,570 548,530 553,570 562,560 568,550 575,490 583,450 590,475 598,400 604,395
    612,450 617,420 625,460 632,440 640,490 645,505 650,500 660,450 670,430 683,425 692,460 700,525 707,500 712,450
    722,410 735,365 748,370 753,450 758,395`, 0, 160, 2.45, 3), 1, 7, ['#2ba04a', '#e2756c'], 11);
candles('nqChart', parse('758,395 765,400 772,383', 0, 160, 2.45, 3), 1, 2, ['#2ba04a', '#e2756c'], 12);

draw('nqVolume', 'M0 741.500H1051M129.500 713V771M416.500 713V771M702.500 713V771M989.500 713V771', '#272727', 1, '1 4');
bars('nqVolume', [[0, 6], [30, 5], [32, 18], [34, 2], [36, 0]], 771, 1, ['#0d557f'], 3);
bars('nqVolume', [[217, 2], [218, 38], [220, 16], [224, 8], [229, 6], [230, 58], [231, 22], [236, 18], [244, 10], [252, 6],
    [260, 10], [268, 4], [280, 4], [286, 10], [290, 5], [300, 9], [306, 8], [307, 36], [309, 4], [311, 1]], 771, 0.7, ['#0d557f'], 5);

/* S&P, 1 minute */
grid = '';
for (let i = 0; i < 11; i++) grid += `M0 ${898 + i * 46.4}H1051`;
for (let i = 0; i < 18; i++) grid += `M${17.5 + i * 59.75} 880V1380`;
draw('esChart', grid, '#272727', 1, '1 4');
draw('esChart', 'M0 1180.500H515M515 1062.500H1051', '#1f8a3a', 1.3);
draw('esChart', 'M515 858V1380', '#157a3c', 1.5, '26 1');
draw('esChart', 'M0 863.500H1051', '#dfb02c', 3, '22 6');
draw('esChart', 'M0 876.500H1051M0 1149.500H1051M0 1265.500H1051', '#e3b02a', 3);
const es = parse(`0,1371 10,1275 20,1254 34,1200 49,1224 69,1290 81,1260 98,1275 113,1245 127,1215 142,1140 157,1080
    175,1050 185,1010 195,940 205,1045 215,990 225,1000 232,955 240,975 258,900 270,850 283,860 303,825 318,845 330,880
    345,840 355,840 373,770 388,835 408,805 430,830 449,790 460,900 480,945 488,910 500,985 520,970 537,1015 550,985
    568,945 600,920 645,880 660,925 682,920 704,855 712,885 722,870 735,915 752,890 770,970 785,1005 795,1040 803,990
    830,980 852,885 880,860 900,820 932,800 945,750 958,722 972,725 985,765 998,745 1012,785 1020,760 1035,800 1047,900
    1062,955 1068,830 1075,860 1125,862 1135,830 1152,832`, 0, 640, 2.45, 3);
const live = es.length - 4;
candles('esChart', es.slice(0, live), 1, 7, ['#2ba04a', '#e2756c'], 13);
candles('esChart', es.slice(live - 1, live + 1), 1, 3, ['#2ba04a', '#2ba04a'], 15);
candles('esChart', es.slice(live), 1, 2, ['#b9c7ba', '#e8b5b0'], 17);

grid = 'M0 1409.500H1051M0 1427.500H1051';
for (let i = 0; i < 18; i++) grid += `M${17.5 + i * 59.75} 1404V1463`;
draw('esVolume', grid, '#272727', 1, '1 4');
draw('esVolume', 'M433.500 1405V1463', '#0d3a58', 1.5);

/* Micro E-mini, main chart */
const mes = parse(`36,525 50,510 65,505 72,515 80,470 85,520 95,490 108,455 120,420 130,380 138,395 150,375
    165,350 180,290 190,280 200,360 210,315 222,325 238,290 246,310 258,270 275,235 290,215 300,215 312,205 322,225
    335,185 345,205 360,210 372,235 385,205 400,195 412,190 425,150 436,140 447,180 460,190 480,175 500,175 515,190
    530,180 540,155 555,230 575,270 585,280 597,250 608,305 640,300 662,335 685,300 720,270 760,265 815,230 835,265
    875,260 897,205 910,235 922,215 940,260 965,240 985,270 995,315 1022,350 1030,315 1075,305 1105,230 1135,215
    1165,185 1210,165 1230,120 1250,102 1270,105 1288,140 1308,118 1325,155 1338,130 1360,165 1372,235 1395,285
    1405,185 1410,210 1488,215 1500,190 1520,188`, 1120, 130, 2.24, 3);
const quiet = mes.length - 4;
candles('priceChart', mes.slice(0, 13), 1.522, 10, ['#178a7d', '#c04a58'], 21, 1);
candles('priceChart', mes.slice(12, quiet + 1), 1.522, 5, ['#178a7d', '#c04a58'], 23, 1);
candles('priceChart', mes.slice(quiet), 1.522, 1, ['#178a7d', '#8a5560'], 27, 1);
bars('priceChart', parse(`38,6 55,10 70,8 72,50 75,44 82,46 92,30 98,18 120,22 137,34 145,18 160,14 178,26 185,15
    200,36 210,15 240,13 270,20 295,18 320,12 330,18 345,9 370,12 400,8 418,20 440,12 470,7 500,5 545,6 553,26 560,14
    575,18 590,12 607,22 620,8 650,9 700,8 750,7 800,6 870,4 900,7 980,8 993,20 1005,11 1027,15 1040,6 1080,5 1095,12
    1130,7 1170,7 1225,10 1260,6 1290,9 1340,6 1362,8 1370,26 1378,12 1392,10 1398,42 1403,32 1408,6 1420,3 1528,2`,
    1120, 0, 2.24, 1), 756, 1.522, ['#175d5b', '#6f3040', '#4c4f55'], 31);

draw('oscChart', line(parse(`76,232 80,380 90,515 97,535 105,550 113,535 120,545 125,518 137,515 145,500 150,420 155,350
    164,330 175,365 177,450 181,360 184,435 195,420 202,425 207,500 220,487 232,495 236,327 242,327 247,400 255,400
    260,325 263,400 300,400 305,327 320,335 326,410 332,345 345,345 353,490 356,430 359,495 363,430 376,424 380,340
    383,398 386,335 400,342 447,335 455,488 467,488 475,350 487,348 490,267 495,268 500,340 508,340 512,398 543,398
    547,338 552,400 557,485 562,498 578,500 584,528 592,500 605,540 612,515 650,520 672,537 708,535 712,447 717,447
    720,535 760,540 775,542 781,532 785,543 808,543 814,522 818,545 855,546 862,533 868,546 878,546 885,525 897,513
    912,515 915,430 948,430 953,515 960,545 967,517 977,517 980,545 985,455 993,460 1000,475 1007,475 1010,563
    1014,563 1018,475 1030,487 1050,488 1058,480 1082,480 1088,450 1120,448 1128,432 1147,430 1150,353 1185,353
    1210,347 1250,342 1255,278 1260,340 1265,342 1270,430 1298,435 1303,347 1340,347 1345,422 1355,422 1358,348
    1362,420 1370,430 1376,517 1392,518 1397,537 1401,528 1528,529`, 1120, 680, 2.24, 3)), '#80848f', 2);
```
